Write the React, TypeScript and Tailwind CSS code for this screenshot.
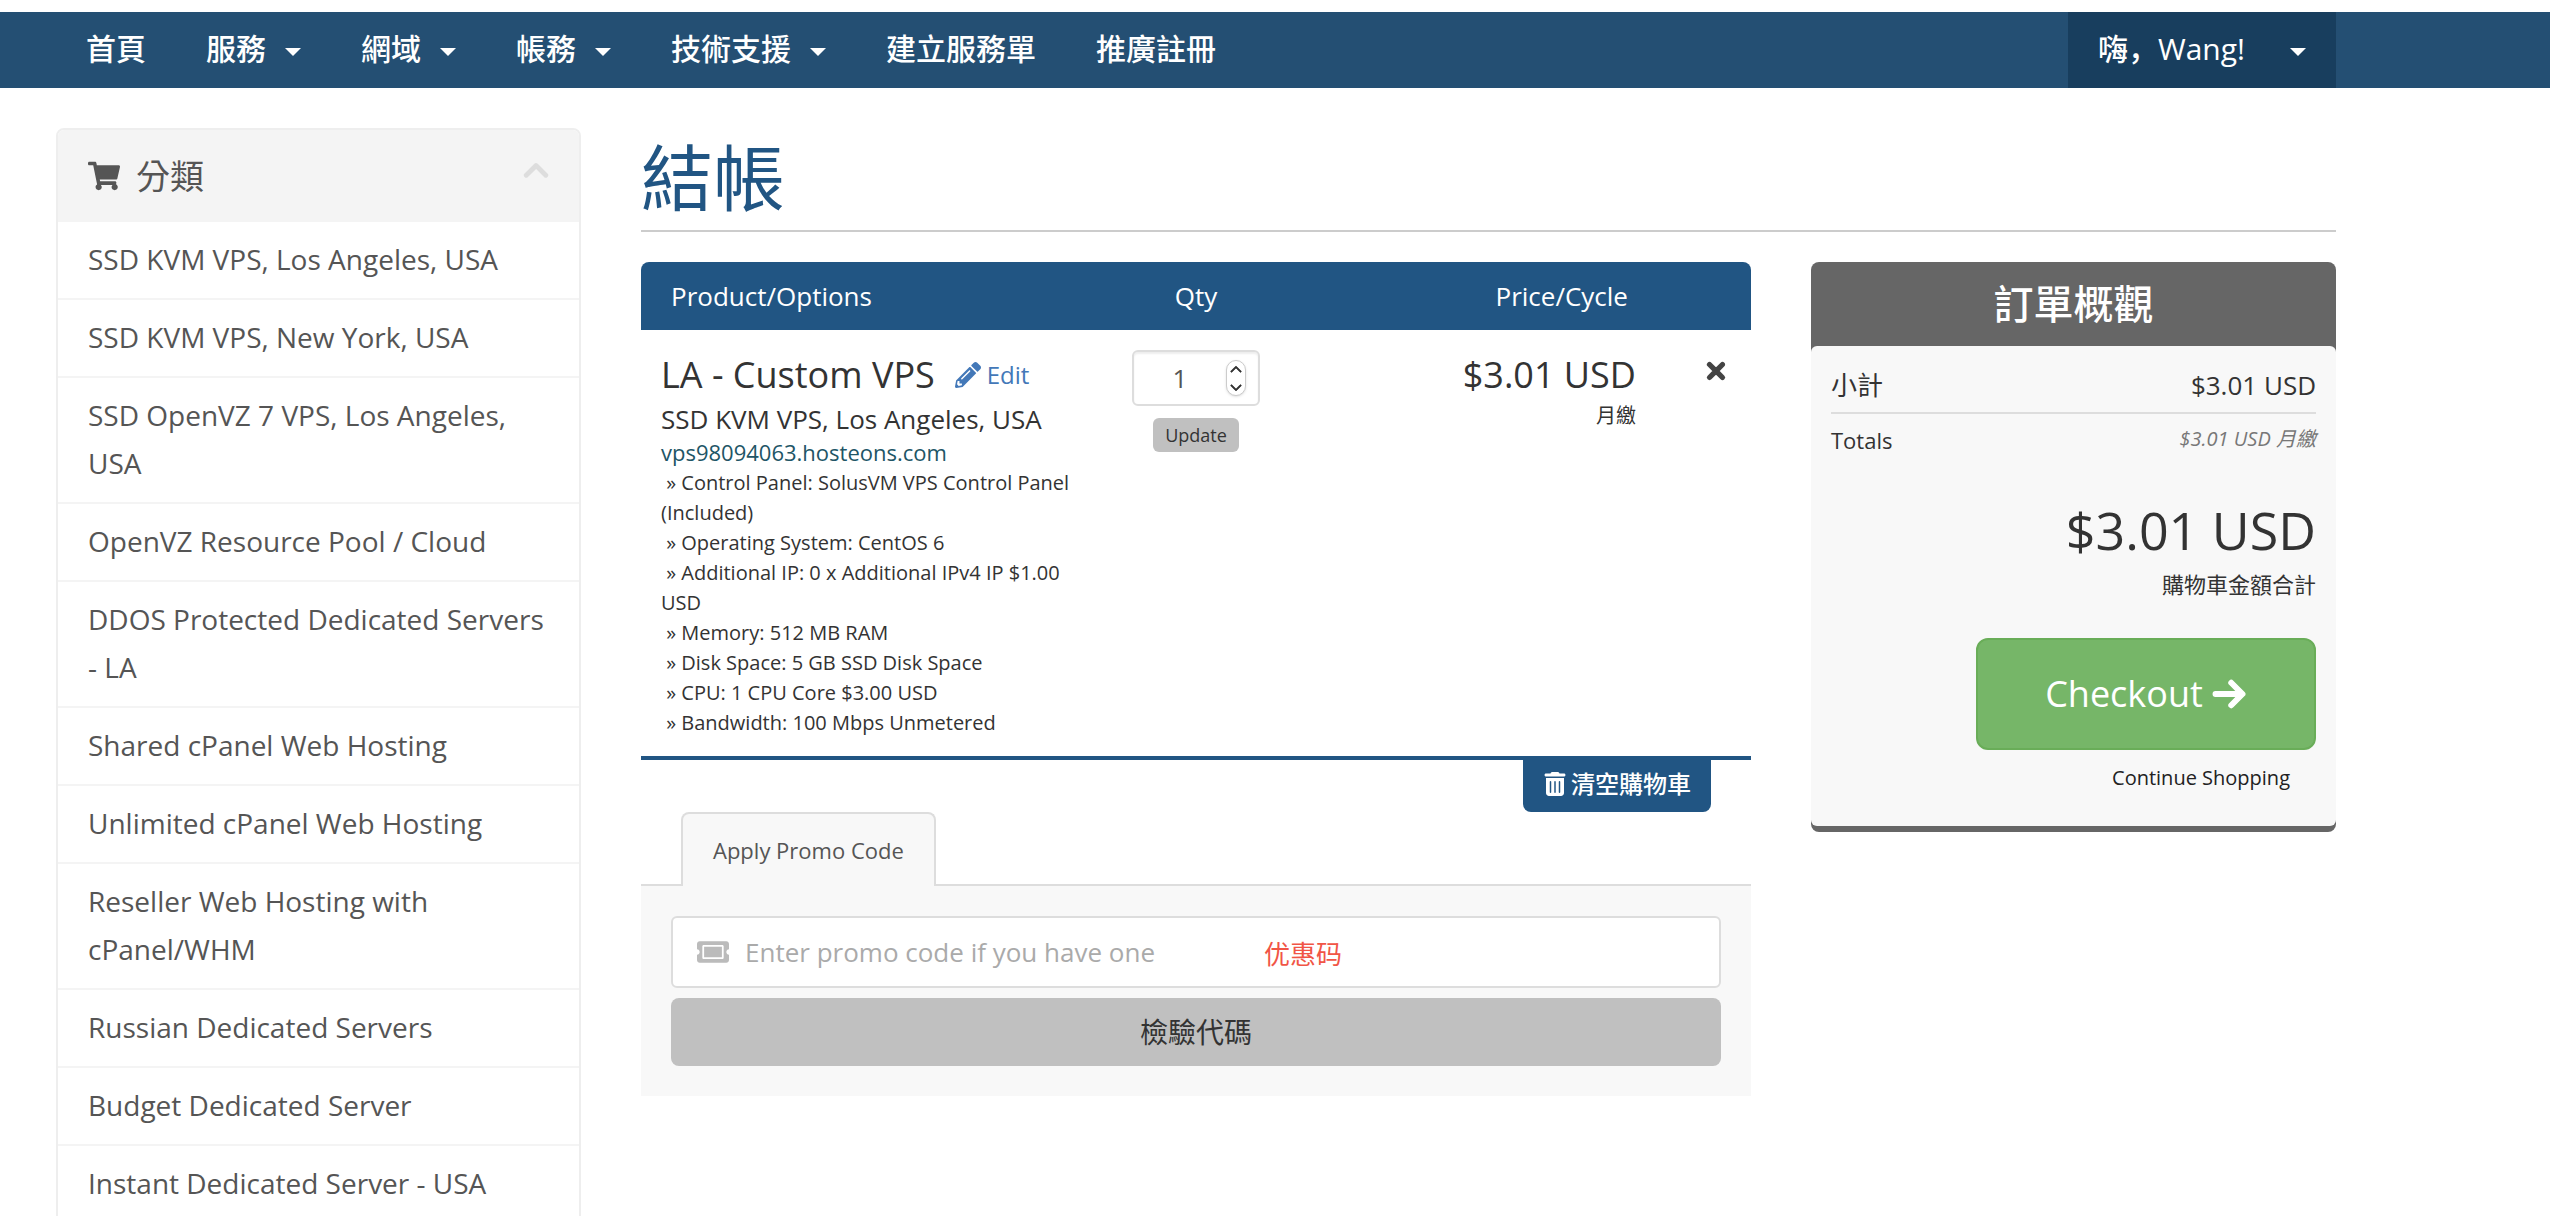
import { useState } from 'react';
import { FaPencilAlt, FaShoppingCart, FaTicketAlt } from 'react-icons/fa';
import { FaArrowRight, FaChevronDown, FaChevronUp, FaTrashCan, FaXmark } from 'react-icons/fa6';

const navItems = [
  { label: '首頁', menu: false },
  { label: '服務', menu: true },
  { label: '網域', menu: true },
  { label: '帳務', menu: true },
  { label: '技術支援', menu: true },
  { label: '建立服務單', menu: false },
  { label: '推廣註冊', menu: false },
];

const categories = [
  'SSD KVM VPS, Los Angeles, USA',
  'SSD KVM VPS, New York, USA',
  'SSD OpenVZ 7 VPS, Los Angeles, USA',
  'OpenVZ Resource Pool / Cloud',
  'DDOS Protected Dedicated Servers - LA',
  'Shared cPanel Web Hosting',
  'Unlimited cPanel Web Hosting',
  'Reseller Web Hosting with cPanel/WHM',
  'Russian Dedicated Servers',
  'Budget Dedicated Server',
  'Instant Dedicated Server - USA',
];

const options = [
  'Control Panel: SolusVM VPS Control Panel (Included)',
  'Operating System: CentOS 6',
  'Additional IP: 0 x Additional IPv4 IP $1.00 USD',
  'Memory: 512 MB RAM',
  'Disk Space: 5 GB SSD Disk Space',
  'CPU: 1 CPU Core $3.00 USD',
  'Bandwidth: 100 Mbps Unmetered',
];

export default function App() {
  return (
    <div className="h-screen overflow-hidden bg-white pt-3 font-['Open_Sans','Noto_Sans_CJK_TC',sans-serif] text-[#333]">
      <NavBar />
      <div className="flex items-start gap-[60px] pt-10 pr-[214px] pl-14">
        <Sidebar />
        <main className="min-w-0 flex-1">
          <h1 className="border-b-2 border-[#ccc] pb-1 text-[72px] leading-[98px] text-[#215583]">結帳</h1>
          <div className="mt-[30px] flex items-start gap-[60px]">
            <div className="min-w-0 flex-1">
              <CartTable />
              <div className="flex justify-end pr-10">
                <button className="flex h-[52px] items-center gap-1 rounded-b-lg bg-[#215583] px-5 pb-1 text-2xl font-medium text-white"><FaTrashCan />清空購物車</button>
              </div>
              <PromoBox />
            </div>
            <Summary />
          </div>
        </main>
      </div>
    </div>
  );
}

function NavBar() {
  return (
    <nav className="flex h-[76px] items-stretch justify-between bg-[#244f73] pr-[214px] pl-14 text-[30px] font-medium text-white">
      <div className="flex">
        {navItems.map((item) => (
          <a key={item.label} href="#" className="flex items-center px-[30px] pb-1">{item.label}{item.menu && <Caret />}</a>
        ))}
      </div>
      <button className="flex w-[268px] items-center justify-between bg-[#183e5e] px-[30px] pb-1 font-['Open_Sans','Noto_Sans_CJK_SC',sans-serif]">嗨，Wang!<Caret /></button>
    </nav>
  );
}

function Caret() { return <span className="mt-2 ml-[19px] border-x-8 border-t-8 border-x-transparent border-t-white" />; }

function Sidebar() {
  return (
    <aside className="w-[525px] shrink-0 rounded-lg border-2 border-[#eee]">
      <h3 className="flex h-[92px] items-center rounded-t-md bg-[#f4f4f4] px-[30px] text-[34px] text-[#555]">
        <FaShoppingCart className="mr-4 text-[32px]" />分類<FaChevronUp className="mb-2 ml-auto stroke-current text-[26px] text-[#ddd] [stroke-width:32]" />
      </h3>
      {categories.map((name) => (
        <a key={name} href="#" className="block border-b-2 border-[#f4f4f4] px-[30px] pt-[13px] pb-[15px] text-[28px] leading-[48px] text-[#555]">{name}</a>
      ))}
    </aside>
  );
}

function CartTable() {
  const [qty, setQty] = useState(1);

  return (
    <table className="w-full table-fixed border-separate border-spacing-0 border-b-4 border-[#215583]">
      <thead>
        <tr className="h-[68px] text-[26px] text-white [&>th]:bg-[#215583] [&>th]:p-0 [&>th]:font-medium">
          <th className="w-[42%] rounded-tl-lg text-left"><span className="ml-[30px]">Product/Options</span></th>
          <th className="w-[16%]">Qty</th>
          <th className="w-[32%] text-right"><span className="mr-3">Price/Cycle</span></th>
          <th className="w-[10%] rounded-tr-lg" />
        </tr>
      </thead>
      <tbody>
        <tr className="align-top">
          <td className="px-5 py-[18px]">
            <div className="flex items-center text-4xl leading-[54px]">LA - Custom VPS
              <a href="#" className="ml-5 flex items-center gap-[6px] text-2xl leading-[54px] text-[#4378b8]"><FaPencilAlt className="text-[26px]" />Edit</a>
            </div>
            <div className="text-[26px] leading-[34px]">SSD KVM VPS, Los Angeles, USA</div>
            <div className="text-[22px] leading-8 text-[#215566]">vps98094063.hosteons.com</div>
            <div className="text-xl leading-[30px]">{options.map((o) => <div key={o}>{`\u00a0» ${o}`}</div>)}</div>
          </td>
          <td className="pt-5">
            <div className="mx-auto flex h-14 w-32 items-center rounded-md border-2 border-[#ddd] pr-3 shadow-[inset_0_2px_2px_rgba(0,0,0,0.07)]">
              <input aria-label="Qty" className="w-full min-w-0 flex-1 bg-transparent text-center text-[26px] text-[#555] outline-none" value={qty} onChange={(e) => setQty(+e.target.value || 0)} />
              <div className="flex h-9 w-5 flex-col items-center justify-around rounded-full border border-[#ccc] bg-white text-xs shadow-sm">
                <button aria-label="Increase" onClick={() => setQty(qty + 1)}><FaChevronUp className="stroke-current [stroke-width:30]" /></button>
                <button aria-label="Decrease" onClick={() => setQty(Math.max(0, qty - 1))}><FaChevronDown className="stroke-current [stroke-width:30]" /></button>
              </div>
            </div>
            <button className="mx-auto mt-3 block h-[34px] rounded-md bg-[#c0c0c0] px-3 text-lg">Update</button>
          </td>
          <td className="pt-[18px] pr-1 text-right">
            <div className="text-4xl leading-[54px]">$3.01 USD</div>
            <div className="text-xl leading-7">月繳</div>
          </td>
          <td className="pt-7 pr-[22px] text-right"><button aria-label="Remove" className="text-[26px] text-[#444]"><FaXmark className="stroke-current [stroke-width:40]" /></button></td>
        </tr>
      </tbody>
    </table>
  );
}

function PromoBox() {
  return (
    <section>
      <button className="relative -mb-[2px] ml-10 block h-[74px] rounded-t-lg border-2 border-b-0 border-[#ddd] bg-[#f8f8f8] px-[30px] text-[22px] text-[#555]">Apply Promo Code</button>
      <div className="border-t-2 border-[#ddd] bg-[#f8f8f8] p-[30px]">
        <label className="flex h-[72px] items-center rounded-md border-2 border-[#ddd] bg-white px-6">
          <FaTicketAlt className="mr-4 shrink-0 text-[32px] text-[#bbb]" />
          <input aria-label="Promo code" className="w-[52%] text-[26px] outline-none placeholder:text-[#aaa]" placeholder="Enter promo code if you have one" />
          <span className="font-['Noto_Sans_CJK_SC',sans-serif] text-[26px] text-[#f15546]">优惠码</span>
        </label>
        <button className="mt-[10px] h-[68px] w-full rounded-lg bg-[#c0c0c0] text-[28px]">檢驗代碼</button>
      </div>
    </section>
  );
}

function Summary() {
  return (
    <aside className="w-[525px] shrink-0 rounded-lg bg-[#666] pb-[6px]">
      <h2 className="text-center text-[40px] leading-[84px] font-medium text-white">訂單概觀</h2>
      <div className="rounded-md bg-[#f8f8f8] px-5 pt-3 pb-5 text-right">
        <div className="flex justify-between border-b-2 border-[#ddd] text-[26px] leading-[54px]"><span>小計</span><span>$3.01 USD</span></div>
        <div className="flex justify-between text-[22px] leading-[52px]"><span>Totals</span><em className="text-xl leading-[50px] text-[#777]">$3.01 USD 月繳</em></div>
        <div className="pt-7 text-[52px] leading-[72px]">$3.01 USD</div>
        <div className="text-[22px] leading-9">購物車金額合計</div>
        <button className="mt-9 ml-auto flex h-28 w-[340px] items-center justify-center gap-2 rounded-xl border-2 border-[#69ad58] bg-[#76b668] text-4xl text-white">Checkout<FaArrowRight className="stroke-current [stroke-width:20]" /></button>
        <a href="#" className="mr-[26px] text-xl leading-[56px] text-[#222]">Continue Shopping</a>
      </div>
    </aside>
  );
}
